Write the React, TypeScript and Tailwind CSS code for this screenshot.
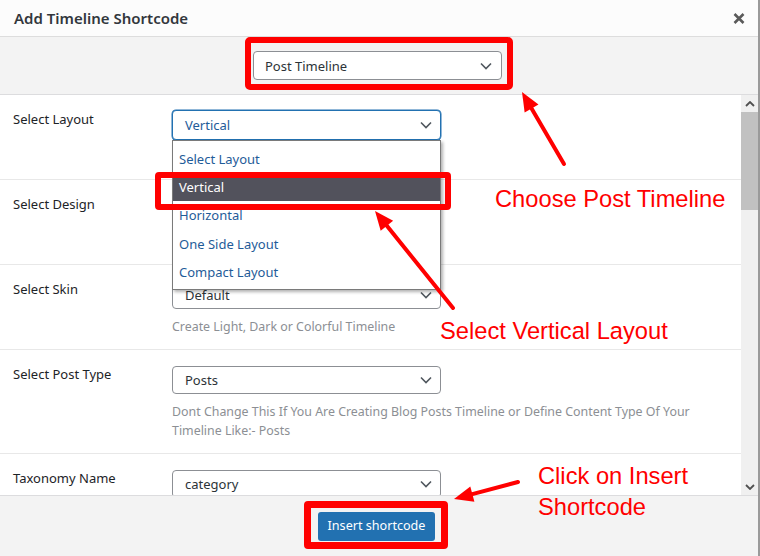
import React from "react";

const UI: React.CSSProperties = { fontFamily: '"Noto Sans", "Segoe UI", Arial, sans-serif' };
const ARIAL: React.CSSProperties = { fontFamily: '"Liberation Sans", Arial, sans-serif' };

function Chevron({ up = false }: { up?: boolean }) {
  return (
    <svg width="12" height="8" viewBox="0 0 12 8" className="shrink-0">
      <path
        d={up ? "M1 6.5 L6 1.5 L11 6.5" : "M1 1.5 L6 6.5 L11 1.5"}
        fill="none"
        stroke="#50575e"
        strokeWidth="1.6"
      />
    </svg>
  );
}

function Select({ value, focused = false, wide = false }: { value: string; focused?: boolean; wide?: boolean }) {
  return (
    <div
      className={
        focused
          ? "flex h-[30px] w-[269px] items-center justify-between rounded-[4px] border border-[#2271b1] bg-white pl-[12px] pr-[8px] text-[13px] text-[#1f5c99] shadow-[0_0_0_0.5px_#2271b1]"
          : wide
          ? "flex h-[29px] w-[249px] items-center justify-between rounded-[4px] border border-[#8c8f94] bg-white pl-[11px] pr-[9px] text-[13px] text-[#2c3338]"
          : "flex h-[28px] w-[269px] items-center justify-between rounded-[4px] border border-[#8c8f94] bg-white pl-[12px] pr-[8px] text-[13px] text-[#2c3338]"
      }
    >
      <span className="pt-[2px]">{value}</span>
      <Chevron />
    </div>
  );
}

function Row({
  label,
  height,
  children,
}: {
  label: string;
  height: string;
  children?: React.ReactNode;
}) {
  return (
    <div className={`flex border-b border-[#e8e8e8] pt-[16px] ${height}`}>
      <div className="w-[172px] shrink-0 pl-[13px] text-[13px] leading-[17px] text-[#1d2327]">{label}</div>
      <div className="flex flex-col">{children}</div>
    </div>
  );
}

function Arrow({ x1, y1, x2, y2 }: { x1: number; y1: number; x2: number; y2: number }) {
  const dx = x2 - x1;
  const dy = y2 - y1;
  const len = Math.sqrt(dx * dx + dy * dy);
  const ux = dx / len;
  const uy = dy / len;
  const L = 19;
  const W = 8;
  const bx = x2 - ux * L;
  const by = y2 - uy * L;
  const px = -uy;
  const py = ux;
  const pts = `${x2},${y2} ${bx + px * W},${by + py * W} ${bx - px * W},${by - py * W}`;
  return (
    <g>
      <line x1={x1} y1={y1} x2={bx + ux * 2} y2={by + uy * 2} stroke="#ff0000" strokeWidth="4" strokeLinecap="round" />
      <polygon points={pts} fill="#ff0000" />
    </g>
  );
}

export default function App() {
  return (
    <div className="relative h-[556px] w-[760px] overflow-hidden bg-white" style={UI}>
      <div className="flex h-full w-full flex-col border-r-2 border-[#9a9a9a]">
        {/* Header */}
        <div className="flex h-[37px] shrink-0 items-center justify-between border-b border-[#dddddd] bg-[#fcfcfc] pl-[14px] pr-[13px]">
          <span className="text-[15px] font-semibold text-[#32373c]">Add Timeline Shortcode</span>
          <svg width="12" height="11" viewBox="0 0 12 11">
            <path d="M1.5 1 L10.5 10 M10.5 1 L1.5 10" stroke="#5a5a5a" strokeWidth="2.6" />
          </svg>
        </div>

        {/* Toolbar */}
        <div className="flex h-[58px] shrink-0 items-center justify-center border-b border-[#dcdcde] bg-[#f3f3f3] pr-[3px]">
          <Select value="Post Timeline" wide />
        </div>

        {/* Content */}
        <div className="flex h-[400px] shrink-0">
          <div className="flex-1 overflow-hidden">
            <Row label="Select Layout" height="h-[85px]">
              <div className="-mt-[1px]">
                <Select value="Vertical" focused />
              </div>
            </Row>
            <Row label="Select Design" height="h-[85px]" />
            <Row label="Select Skin" height="h-[85px]">
              <Select value="Default" />
              <div className="mt-[9px] text-[12.4px] leading-[18px] text-[#8c8f94]">Create Light, Dark or Colorful Timeline</div>
            </Row>
            <Row label="Select Post Type" height="h-[104px]">
              <Select value="Posts" />
              <div className="mt-[8px] text-[12.4px] leading-[19px] text-[#8c8f94]">
                Dont Change This If You Are Creating Blog Posts Timeline or Define Content Type Of Your
                <br />
                Timeline Like:- Posts
              </div>
            </Row>
            <Row label="Taxonomy Name" height="h-[60px]">
              <Select value="category" />
            </Row>
          </div>
          {/* Scrollbar */}
          <div className="flex w-[17px] shrink-0 flex-col bg-[#f0f0f0]">
            <div className="flex h-[17px] items-center justify-center">
              <svg width="10" height="6" viewBox="0 0 10 6">
                <path d="M1 5 L5 1 L9 5" fill="none" stroke="#505050" strokeWidth="1.8" />
              </svg>
            </div>
            <div className="h-[98px] bg-[#c1c1c1]" />
            <div className="flex-1" />
            <div className="flex h-[17px] items-center justify-center">
              <svg width="10" height="6" viewBox="0 0 10 6">
                <path d="M1 1 L5 5 L9 1" fill="none" stroke="#505050" strokeWidth="1.8" />
              </svg>
            </div>
          </div>
        </div>

        {/* Footer */}
        <div className="flex flex-1 items-center justify-center border-t border-[#dcdcde] bg-[#f3f3f3] pr-[5px]">
          <div className="flex h-[29px] w-[117px] items-center justify-center rounded-[3px] bg-[#2271b1] pt-[1px] text-[12.6px] text-white">
            Insert shortcode
          </div>
        </div>
      </div>

      {/* Dropdown list overlay */}
      <div className="absolute left-[172px] top-[140px] h-[150px] w-[269px] border border-[#7a7a7a] bg-white pt-[4px] text-[13px] shadow-[2px_2px_3px_rgba(0,0,0,0.3)]">
        <div className="flex h-[28px] items-center pl-[6px] pt-[2px] text-[#1f5c99]">Select Layout</div>
        <div className="flex h-[28px] items-center bg-[#52525c] pl-[6px] pt-[2px] text-white">Vertical</div>
        <div className="flex h-[28px] items-center pl-[6px] pt-[2px] text-[#1f5c99]">Horizontal</div>
        <div className="flex h-[28px] items-center pl-[6px] pt-[3px] text-[#1f5c99]">One Side Layout</div>
        <div className="flex h-[28px] items-center pl-[6px] pt-[3px] text-[#1f5c99]">Compact Layout</div>
      </div>

      {/* Red highlight boxes */}
      <div className="absolute left-[245px] top-[37px] h-[53px] w-[268px] rounded-[5px] border-[6px] border-[#ff0000]" />
      <div className="absolute left-[155px] top-[172px] h-[38px] w-[296px] rounded-[4px] border-[6px] border-[#ff0000]" />
      <div className="absolute left-[304px] top-[501px] h-[48px] w-[144px] rounded-[4px] border-[7px] border-[#ff0000]" />

      {/* Annotation text */}
      <div className="absolute left-[495px] top-[187px] text-[23.7px] leading-[24px] text-[#ff0000]" style={ARIAL}>
        Choose Post Timeline
      </div>
      <div className="absolute left-[440px] top-[319px] text-[23.7px] leading-[24px] text-[#ff0000]" style={ARIAL}>
        Select Vertical Layout
      </div>
      <div className="absolute left-[538px] top-[461px] text-[23.7px] leading-[31px] text-[#ff0000]" style={ARIAL}>
        Click on Insert
        <br />
        Shortcode
      </div>

      {/* Arrows */}
      <svg className="pointer-events-none absolute left-0 top-0" width="760" height="556" viewBox="0 0 760 556">
        <Arrow x1={564} y1={164} x2={522} y2={92} />
        <Arrow x1={453} y1={308} x2={375} y2={211} />
        <Arrow x1={518} y1={482} x2={454} y2={499} />
      </svg>
    </div>
  );
}
